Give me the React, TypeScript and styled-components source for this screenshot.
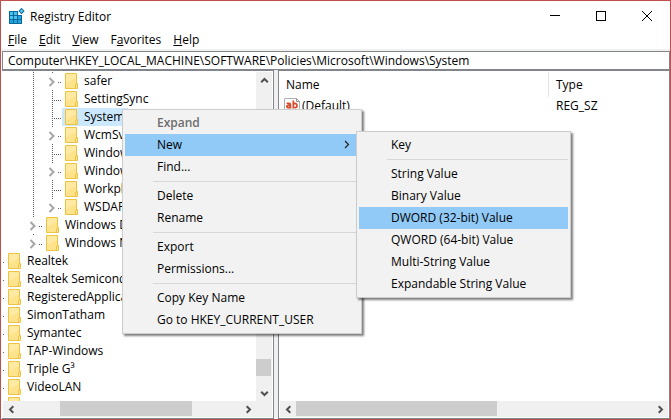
import React from "react";
import styled, { createGlobalStyle } from "styled-components";

const GlobalStyle = createGlobalStyle`
  *, *::before, *::after { box-sizing: border-box; }
  body { margin: 0; background: #fff; }
  body, button, input, table { font-family: "Open Sans", "Noto Sans", sans-serif; font-size: 12px; color: #000; }
  button { background: none; border: 0; padding: 0; margin: 0; text-align: left; }
  ul { list-style: none; margin: 0; padding: 0; }
  svg { display: block; flex: none; }
`;

const Window = styled.main`
  position: relative;
  display: flex;
  flex-direction: column;
  height: 100vh;
  border: 1px solid #c0504a;
  background: #fff;
  overflow: hidden;
`;

const TitleBar = styled.header`
  display: flex;
  align-items: center;
  flex: none;
  height: 30px;
  padding-left: 8px;
`;

const Title = styled.h1`
  flex: 1;
  margin: 0 0 0 4px;
  font-size: 12px;
  font-weight: 400;
`;

const CaptionButton = styled.button`
  display: flex;
  align-items: center;
  justify-content: center;
  width: 46px;
  height: 28px;
`;

const MenuBar = styled.nav`
  display: flex;
  flex: none;
  height: 20px;
  padding-left: 1px;
  border-bottom: 2px solid #f0f0f0;
`;

const MenuBarButton = styled.button`
  padding: 0 6px;
  line-height: 18px;
`;

const AddressInput = styled.input`
  flex: none;
  width: auto;
  height: 19px;
  margin-left: 1px;
  padding: 0 5px;
  border: 1px solid #82868c;
  border-radius: 0;
  outline: 0;
  line-height: 17px;
`;

const Panes = styled.div`
  display: flex;
  flex: 1;
  min-height: 0;
  gap: 4px;
  margin-left: 1px;
  background: #f0f0f0;
`;

const Pane = styled.section<{ $width?: number }>`
  display: flex;
  flex-direction: column;
  flex: ${(p) => (p.$width ? `0 0 ${p.$width}px` : "1 1 0")};
  min-width: 0;
  padding-top: 1px;
  border: 1px solid #82868c;
  border-left-width: ${(p) => (p.$width ? 0 : 1)}px;
  background: #fff;
`;

const PaneBody = styled.div`
  display: flex;
  flex: 1;
  min-height: 0;
`;

const Tree = styled.ul`
  flex: 1;
  min-width: 0;
  overflow: hidden;
`;

const TreeRow = styled.li<{ $level: number }>`
  display: flex;
  height: 18px;
  padding-left: ${(p) => (p.$level ? 22 : 0)}px;
`;

const TreeLabel = styled.button<{ $selected?: boolean }>`
  display: flex;
  align-items: center;
  gap: 6px;
  height: 18px;
  padding: 0 4px 0 3px;
  line-height: 18px;
  white-space: nowrap;
  background: ${(p) => (p.$selected ? "#cce8ff" : "transparent")};
`;

const VScroll = styled.div`
  display: flex;
  flex-direction: column;
  flex: none;
  width: 16px;
  margin-right: 1px;
  background: #f0f0f0;
`;

const HScroll = styled.div<{ $corner?: boolean }>`
  display: flex;
  flex: none;
  height: 16px;
  margin: 0 1px 1px;
  padding-right: ${(p) => (p.$corner ? 16 : 0)}px;
  background: #f0f0f0;
`;

const ScrollButton = styled.button`
  display: flex;
  align-items: center;
  justify-content: center;
  flex: none;
  width: 16px;
  height: 16px;
`;

const Track = styled.div<{ $grow: number }>`
  flex: ${(p) => p.$grow} 1 0;
`;

const Thumb = styled.div<{ $grow: number }>`
  flex: ${(p) => p.$grow} 1 0;
  margin: 0 1px 1px 0;
  background: #cdcdcd;
`;

const Values = styled.table`
  align-self: flex-start;
  width: 100%;
  table-layout: fixed;
  border-collapse: separate;
  border-spacing: 0;
  th, td { padding: 0 0 0 7px; text-align: left; font-weight: 400; line-height: 17px; }
  th { height: 25px; }
  th:first-child { width: 270px; border-right: 1px solid #e5e5e5; }
  td:first-child { padding-left: 5px; }
`;

const ValueName = styled.span`
  display: flex;
  align-items: center;
  gap: 2px;
`;

const MenuPanel = styled.ul<{ $kind: "root" | "sub" }>`
  position: absolute;
  z-index: 1;
  top: ${(p) => (p.$kind === "root" ? "108px" : "-3px")};
  left: ${(p) => (p.$kind === "root" ? "121px" : "calc(100% - 3px)")};
  width: ${(p) => (p.$kind === "root" ? 240 : 215)}px;
  padding: 2px;
  border: 1px solid #ccc;
  background: #f2f2f2;
  box-shadow: 2px 2px 2px rgba(0, 0, 0, 0.5);
`;

const MenuEntry = styled.li`
  position: relative;
`;

const MenuButton = styled.button<{ $active?: boolean; $default?: boolean }>`
  display: flex;
  align-items: center;
  justify-content: space-between;
  width: 100%;
  height: 22px;
  padding: 0 9px 2px 32px;
  white-space: nowrap;
  font-weight: ${(p) => (p.$default ? 600 : 400)};
  background: ${(p) => (p.$active ? "#91c9f7" : "transparent")};
  &:disabled { color: #6d6d6d; }
`;

const Separator = styled.li`
  height: 7px;
  margin-left: 28px;
  padding-top: 3px;
  &::before { content: ""; display: block; height: 1px; background: #d7d7d7; }
`;

const range = (from: number, to: number) => {
  const out: number[] = [];
  for (let n = from; n <= to; n += 2) out.push(n);
  return out;
};

const Dots = ({ xs, ys }: { xs: number[]; ys: number[] }) => (
  <>
    {xs.flatMap((x) => ys.map((y) => <rect key={`${x}-${y}`} x={x} y={y} width="1" height="1" fill="#606060" />))}
  </>
);

const Guide = () => (
  <svg width="19" height="18" aria-hidden="true">
    <Dots xs={[9]} ys={range(0, 16)} />
  </svg>
);

const Branch = ({ expandable }: { expandable?: boolean }) => (
  <svg width="19" height="18" aria-hidden="true">
    {expandable ? (
      <>
        <Dots xs={[9]} ys={[0]} />
        <Dots xs={[17]} ys={[10]} />
        <Dots xs={[15]} ys={[10]} />
        <path d="M6.500 6L10.500 10L6.500 14" fill="none" stroke="#a6a6a6" strokeWidth="2" />
      </>
    ) : (
      <>
        <Dots xs={[9]} ys={range(0, 16)} />
        <Dots xs={range(11, 17)} ys={[10]} />
      </>
    )}
  </svg>
);

const Stub = () => (
  <svg width="3" height="18" aria-hidden="true">
    <Dots xs={[1]} ys={[10]} />
  </svg>
);

const Folder = () => (
  <svg width="13" height="16" aria-hidden="true">
    <path d="M.5 .5H11.5V10.5H12.5V15.5H.5Z" fill="#ffe38c" stroke="#ebc443" />
    <path d="M1 1H11V5L1 10Z" fill="#ffe9a3" />
    <path d="M10.5 15V11.5L12.5 10.5" fill="none" stroke="#ebc443" />
  </svg>
);

const RegistryIcon = () => (
  <svg width="17" height="17" viewBox="0 0 17 17" aria-hidden="true">
    <path d="M0 3H9V7H13V16H0Z" fill="#0d6797" />
    <path d="M1 4H4V7H1ZM5 4H8V7H5ZM1 8H4V11H1ZM5 8H8V11H5Z" fill="#49c2f0" />
    <path d="M9 8H12V11H9ZM1 12H4V15H1ZM5 12H8V15H5ZM9 12H12V15H9Z" fill="#22a4df" />
    <path d="M12.500 -.2L15.700 3L12.500 6.200L9.300 3Z" fill="#0d6f9f" />
    <path d="M12.500 1.300L14.200 3L12.500 4.700L10.800 3Z" fill="#63d0f5" />
  </svg>
);

const StringIcon = () => (
  <svg width="16" height="16" viewBox="0 0 16 16" aria-hidden="true">
    <path d="M.5 .5H12.500L15.500 3.500V15.500H.5Z" fill="#fff" stroke="#b0b0b0" />
    <path d="M12.500 .5V3.500H15.500" fill="none" stroke="#909090" />
    <g fill="none" stroke="#d8492a" strokeWidth="1.700">
      <path d="M2.600 5.300H5Q6.400 5.300 6.400 6.700V10.500M6.400 7.300H4.200Q2.800 7.500 2.800 8.600Q2.800 9.600 4.200 9.600Q6 9.600 6.400 8.500" />
      <path d="M9.300 2.500V10.500M9.300 6.300Q10 5.300 11.300 5.300Q13 5.500 13 7.500Q13 9.500 11.300 9.600Q10 9.600 9.300 8.800" />
    </g>
  </svg>
);

const rotations = { up: 0, right: 90, down: 180, left: 270 };

const Arrow = ({ to }: { to: keyof typeof rotations }) => (
  <svg width="9" height="9" viewBox="0 0 9 9" aria-hidden="true">
    <path d="M1.200 6.300L4.500 3L7.800 6.300" fill="none" stroke="#505050" strokeWidth="2" transform={`rotate(${rotations[to]} 4.500 4.500)`} />
  </svg>
);

type ScrollProps = { before: number; thumb: number; after: number; corner?: boolean };

const HorizontalScroll = ({ before, thumb, after, corner }: ScrollProps) => (
  <HScroll $corner={corner}>
    <ScrollButton aria-label="Scroll left"><Arrow to="left" /></ScrollButton>
    <Track $grow={before} />
    <Thumb $grow={thumb} />
    <Track $grow={after} />
    <ScrollButton aria-label="Scroll right"><Arrow to="right" /></ScrollButton>
  </HScroll>
);

type Key = { name: string; level: number; expandable?: boolean; selected?: boolean };

const keys: Key[] = [
  { name: "safer", level: 3, expandable: true },
  { name: "SettingSync", level: 3 },
  { name: "System", level: 3, selected: true },
  { name: "WcmSvc", level: 3, expandable: true },
  { name: "Windows", level: 3 },
  { name: "Windows", level: 3, expandable: true },
  { name: "Workplace", level: 3 },
  { name: "WSDAPI", level: 3, expandable: true },
  { name: "Windows Def", level: 2, expandable: true },
  { name: "Windows NT", level: 2, expandable: true },
  { name: "Realtek", level: 0 },
  { name: "Realtek Semiconductor", level: 0 },
  { name: "RegisteredApplications", level: 0 },
  { name: "SimonTatham", level: 0 },
  { name: "Symantec", level: 0 },
  { name: "TAP-Windows", level: 0 },
  { name: "Triple G³", level: 0 },
  { name: "VideoLAN", level: 0 },
  { name: "", level: 0 },
];

const menuBar = [["", "F", "ile"], ["", "E", "dit"], ["", "V", "iew"], ["F", "a", "vorites"], ["", "H", "elp"]];

type Item = { label: string; active?: boolean; disabled?: boolean; children?: (Item | null)[] };

const contextMenu: (Item | null)[] = [
  { label: "Expand", disabled: true },
  {
    label: "New",
    active: true,
    children: [
      { label: "Key" },
      null,
      { label: "String Value" },
      { label: "Binary Value" },
      { label: "DWORD (32-bit) Value", active: true },
      { label: "QWORD (64-bit) Value" },
      { label: "Multi-String Value" },
      { label: "Expandable String Value" },
    ],
  },
  { label: "Find..." },
  null,
  { label: "Delete" },
  { label: "Rename" },
  null,
  { label: "Export" },
  { label: "Permissions..." },
  null,
  { label: "Copy Key Name" },
  { label: "Go to HKEY_CURRENT_USER" },
];

const Menu = ({ items, kind }: { items: (Item | null)[]; kind: "root" | "sub" }) => (
  <MenuPanel role="menu" $kind={kind}>
    {items.map((item, i) =>
      item ? (
        <MenuEntry key={i} role="none">
          <MenuButton role="menuitem" disabled={item.disabled} $active={item.active} $default={item.disabled}>
            {item.label}
            {item.children && (
              <svg width="6" height="9" aria-hidden="true">
                <path d="M1 1L4.500 4.500L1 8" fill="none" stroke="#222" strokeWidth="1.200" />
              </svg>
            )}
          </MenuButton>
          {item.children && <Menu items={item.children} kind="sub" />}
        </MenuEntry>
      ) : (
        <Separator key={i} role="separator" />
      )
    )}
  </MenuPanel>
);

export default function App() {
  return (
    <Window>
      <GlobalStyle />
      <TitleBar>
        <RegistryIcon />
        <Title>Registry Editor</Title>
        <CaptionButton aria-label="Minimize">
          <svg width="10" height="10"><path d="M0 4.500H10" stroke="#000" /></svg>
        </CaptionButton>
        <CaptionButton aria-label="Maximize">
          <svg width="10" height="10"><rect x=".5" y=".5" width="9" height="9" fill="none" stroke="#000" /></svg>
        </CaptionButton>
        <CaptionButton aria-label="Close">
          <svg width="10" height="10"><path d="M0 0L10 10M10 0L0 10" stroke="#000" /></svg>
        </CaptionButton>
      </TitleBar>
      <MenuBar aria-label="Main menu">
        {menuBar.map(([before, key, after]) => (
          <MenuBarButton key={before + key + after}>{before}<u>{key}</u>{after}</MenuBarButton>
        ))}
      </MenuBar>
      <AddressInput
        aria-label="Registry path"
        defaultValue="Computer\HKEY_LOCAL_MACHINE\SOFTWARE\Policies\Microsoft\Windows\System"
      />
      <Panes>
        <Pane $width={272} aria-label="Keys">
          <PaneBody>
            <Tree>
              {keys.map((k, i) => (
                <TreeRow key={i} $level={k.level}>
                  {k.level === 3 && <Guide />}
                  {k.level === 0 ? <Stub /> : <Branch expandable={k.expandable} />}
                  <TreeLabel $selected={k.selected}><Folder />{k.name}</TreeLabel>
                </TreeRow>
              ))}
            </Tree>
            <VScroll>
              <ScrollButton aria-label="Scroll up"><Arrow to="up" /></ScrollButton>
              <Track $grow={271} />
              <Thumb $grow={17} />
              <Track $grow={8} />
              <ScrollButton aria-label="Scroll down"><Arrow to="down" /></ScrollButton>
            </VScroll>
          </PaneBody>
          <HorizontalScroll before={41} thumb={132} after={47} corner />
        </Pane>
        <Pane aria-label="Values">
          <PaneBody>
            <Values>
              <thead>
                <tr><th scope="col">Name</th><th scope="col">Type</th></tr>
              </thead>
              <tbody>
                <tr><td><ValueName><StringIcon />(Default)</ValueName></td><td>REG_SZ</td></tr>
              </tbody>
            </Values>
          </PaneBody>
          <HorizontalScroll before={0} thumb={201} after={154} />
        </Pane>
      </Panes>
      <Menu items={contextMenu} kind="root" />
    </Window>
  );
}
